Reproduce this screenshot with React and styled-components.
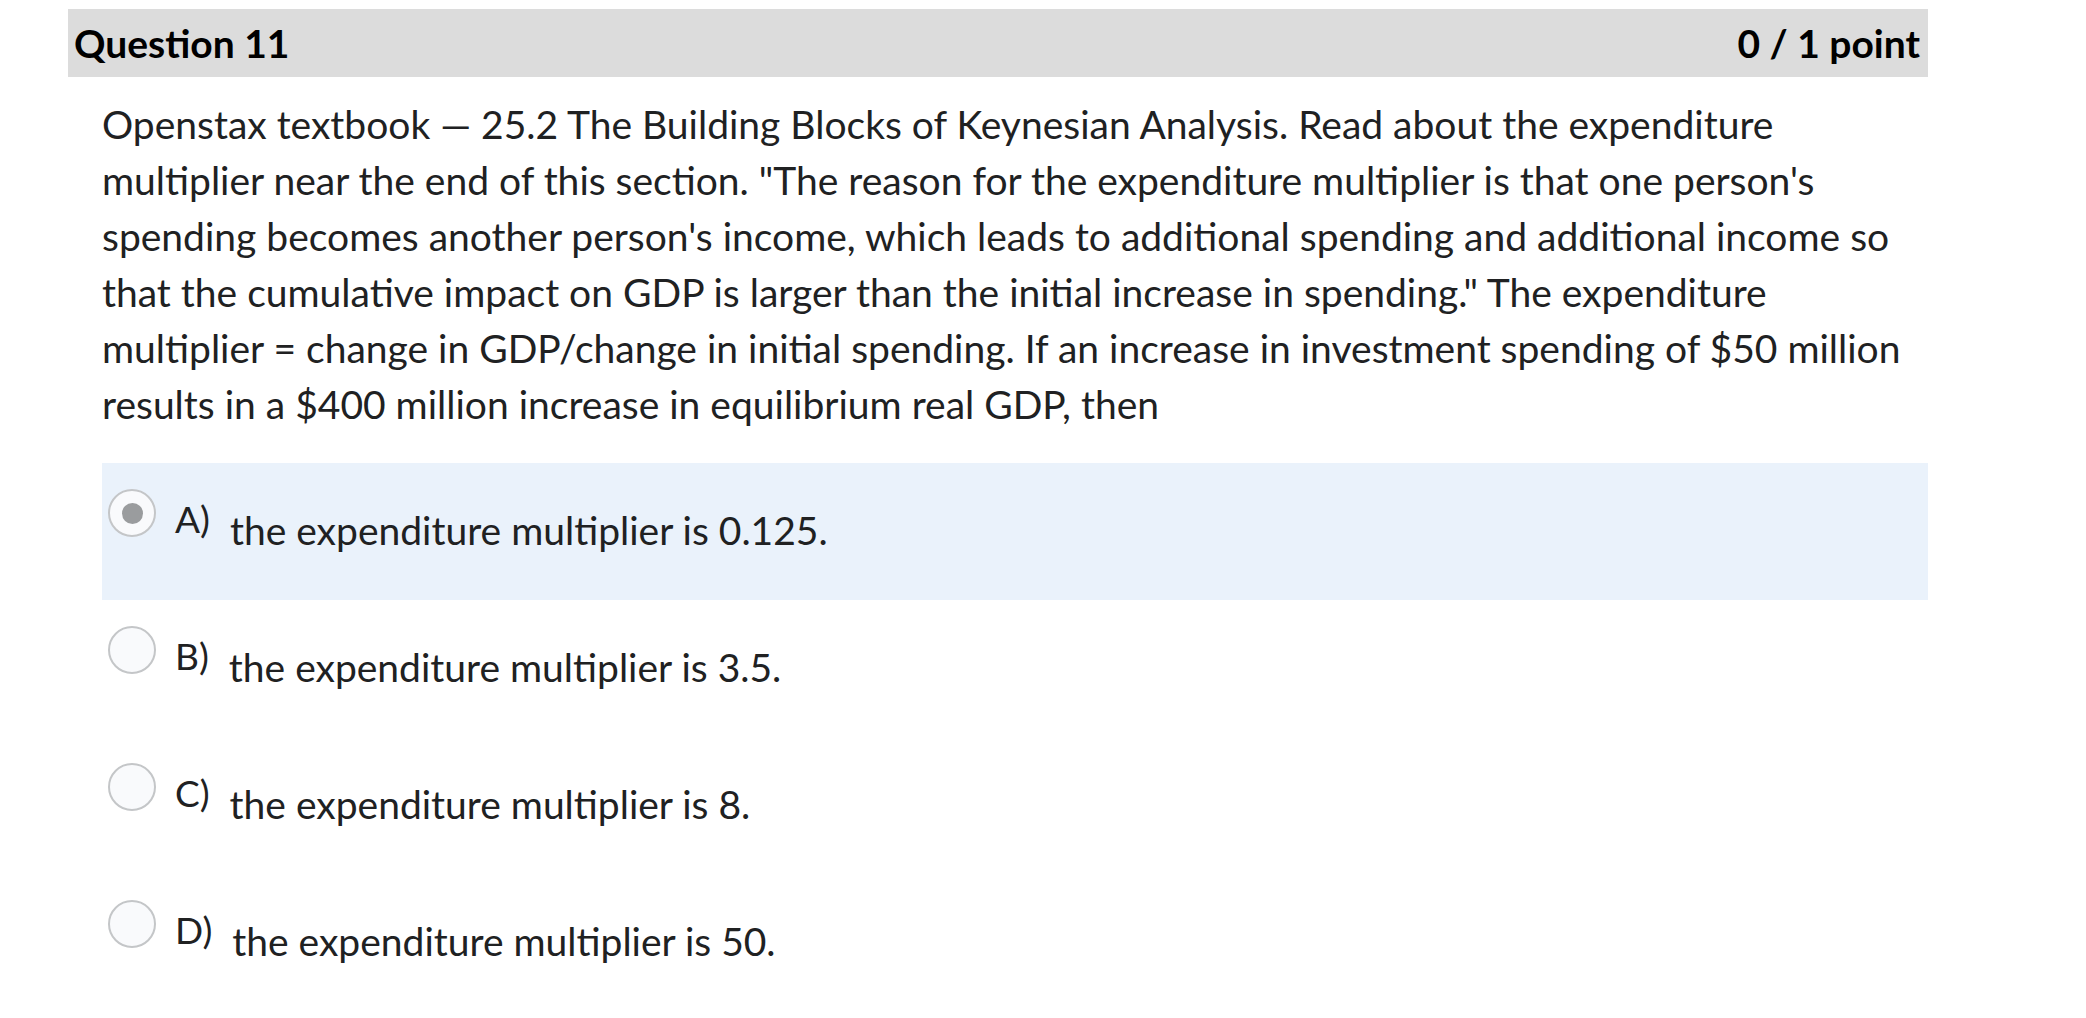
import React from "react";
import styled, { createGlobalStyle } from "styled-components";

const GlobalStyle = createGlobalStyle`
  html, body {
    margin: 0;
    padding: 0;
    background: #ffffff;
  }
  body {
    font-family: Lato, "Open Sans", "Liberation Sans", sans-serif;
    color: #202122;
  }
`;

const Page = styled.div`
  padding: 9px 0 0 68px;
  width: 1860px;
`;

const Header = styled.div`
  display: flex;
  justify-content: space-between;
  align-items: center;
  height: 68px;
  padding: 0 8px 0 6px;
  background: #dcdcdc;
  font-weight: 700;
  font-size: 39px;
  color: #000000;
`;

const Body = styled.div`
  padding-left: 34px;
`;

const Prompt = styled.p`
  margin: 19px 0 31px 0;
  font-size: 39px;
  line-height: 56px;
`;

const OptionList = styled.div`
  display: flex;
  flex-direction: column;
`;

const OptionRow = styled.label`
  display: flex;
  align-items: flex-start;
  height: 137px;
  box-sizing: border-box;
  padding: 26px 0 0 6px;
  background: ${(p) => (p.selected ? "#eaf2fb" : "transparent")};
`;

const Radio = styled.span`
  flex: none;
  display: flex;
  align-items: center;
  justify-content: center;
  width: 48px;
  height: 48px;
  box-sizing: border-box;
  border-radius: 50%;
  border: 2px solid #c4c6c8;
  background: #f9fafc;
`;

const Dot = styled.span`
  width: 21px;
  height: 21px;
  border-radius: 50%;
  background: #9a9c9e;
`;

const Letter = styled.span`
  margin: 8px 0 0 19px;
  font-size: 37px;
  line-height: 44px;
`;

const AnswerText = styled.span`
  margin: 16px 0 0 20px;
  font-size: 39px;
  line-height: 50px;
`;

const options = [
  { letter: "A)", text: "the expenditure multiplier is 0.125.", selected: true },
  { letter: "B)", text: "the expenditure multiplier is 3.5." },
  { letter: "C)", text: "the expenditure multiplier is 8." },
  { letter: "D)", text: "the expenditure multiplier is 50." },
];

export default function App() {
  return (
    <>
      <GlobalStyle />
      <Page>
        <Header>
          <span>Question 11</span>
          <span>0 / 1 point</span>
        </Header>
        <Body>
          <Prompt>
            Openstax textbook — 25.2 The Building Blocks of Keynesian Analysis. Read about the
            expenditure multiplier near the end of this section. "The reason for the expenditure
            multiplier is that one person's spending becomes another person's income, which leads
            to additional spending and additional income so that the cumulative impact on GDP is
            larger than the initial increase in spending." The expenditure multiplier = change in
            GDP/change in initial spending. If an increase in investment spending of $50 million
            results in a $400 million increase in equilibrium real GDP, then
          </Prompt>
          <OptionList>
            {options.map((o) => (
              <OptionRow key={o.letter} selected={o.selected}>
                <Radio>{o.selected && <Dot />}</Radio>
                <Letter>{o.letter}</Letter>
                <AnswerText>{o.text}</AnswerText>
              </OptionRow>
            ))}
          </OptionList>
        </Body>
      </Page>
    </>
  );
}
